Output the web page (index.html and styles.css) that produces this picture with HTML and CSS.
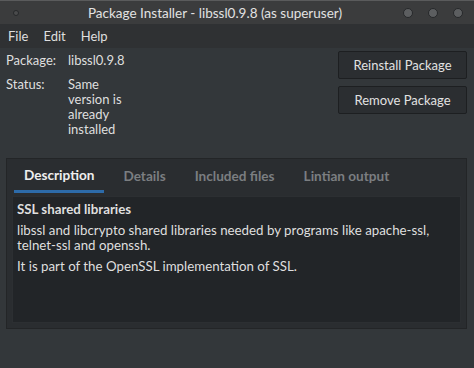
FILE: index.html
```html
<!DOCTYPE html>
<html>
<head>
    <link rel="stylesheet" href="styles.css">
</head>
<body>
    <div class="titlebar">
        <span class="dot small"></span>
        <span class="title">Package Installer - libssl0.9.8 (as superuser)</span>
        <span class="controls">
            <span class="dot"></span>
            <span class="dot"></span>
            <span class="dot"></span>
        </span>
    </div>

    <div class="menubar">
        <span>File</span>
        <span>Edit</span>
        <span>Help</span>
    </div>

    <div class="main">
        <div class="info">
            <div class="row">
                <label>Package:</label>
                <span>libssl0.9.8</span>
            </div>
            <div class="row">
                <label>Status:</label>
                <span class="status">Same<br>version is<br>already<br>installed</span>
            </div>
        </div>
        <div class="actions">
            <button>Reinstall Package</button>
            <button>Remove Package</button>
        </div>
    </div>

    <div class="notebook">
        <div class="tabs">
            <span class="tab active">Description</span>
            <span class="tab">Details</span>
            <span class="tab">Included files</span>
            <span class="tab">Lintian output</span>
        </div>
        <div class="page">
            <h4>SSL shared libraries</h4>
            <p>libssl and libcrypto shared libraries needed by programs like apache-ssl, telnet-ssl and openssh.</p>
            <p>It is part of the OpenSSL implementation of SSL.</p>
        </div>
    </div>
</body>
</html>
```

FILE: styles.css
```css
html,
body {
    margin: 0;
    height: 100%;
}

body {
    background: #33373a;
    color: #dfdfdf;
    font-family: 'Lato', 'Liberation Sans', sans-serif;
    font-size: 13px;
    overflow: hidden;
}

.titlebar {
    height: 24px;
    background: #3b3c3d;
    border-top: 1px solid #5a5b5c;
    box-sizing: border-box;
    display: flex;
    align-items: center;
    padding: 0 12px;
    color: #e2e2e2;
}

.title {
    flex: 1;
    text-align: center;
    padding-left: 8px;
    font-size: 13.5px;
}

.dot {
    display: inline-block;
    width: 10px;
    height: 10px;
    border-radius: 50%;
    background: #5c5e60;
    border: 1px solid #26282a;
    box-sizing: border-box;
}

.dot.small {
    width: 6px;
    height: 6px;
    background: #4a4b4c;
    margin-left: 1px;
}

.controls {
    display: flex;
    gap: 15px;
    margin-right: -1px;
}

.menubar {
    height: 24px;
    background: #2f3133;
    display: flex;
    align-items: center;
    gap: 15px;
    padding: 0 8px;
}

.main {
    display: flex;
    justify-content: space-between;
    padding: 3px 7px 0 6px;
    height: 107px;
}

.info {
    padding-top: 2px;
}

.row {
    display: flex;
    margin-bottom: 9px;
    line-height: 15px;
}

.row label {
    width: 62px;
}

.actions {
    display: flex;
    flex-direction: column;
    gap: 7px;
}

.actions button {
    width: 129px;
    height: 28px;
    background: #2b2e31;
    border: 1px solid #1d1f21;
    border-radius: 2px;
    color: #e2e2e2;
    font-family: inherit;
    font-size: 13px;
}

.notebook {
    margin: 0 7px 0 6px;
    height: 171px;
    background: #2a2d30;
    border: 1px solid #232527;
    box-sizing: border-box;
    padding: 0 5px 5px;
    display: flex;
    flex-direction: column;
}

.tabs {
    display: flex;
    height: 34px;
    align-items: center;
    padding-left: 2px;
    margin-bottom: 3px;
}

.tab {
    padding: 0 10px;
    margin-right: 9px;
    font-weight: bold;
    font-size: 13.6px;
    color: #7b7e81;
    height: 100%;
    display: flex;
    align-items: center;
    box-sizing: border-box;
}

.tab.active {
    color: #eeeeee;
    border-bottom: 3px solid #2d6ba9;
    padding-top: 1px;
}

.page {
    flex: 1;
    background: #222528;
    border: 1px solid #2c2f32;
    padding: 4px 4px;
}

.page h4 {
    margin: 0 0 6px;
    font-size: 13.3px;
}

.page p {
    margin: 0 0 7px;
    line-height: 14.5px;
    font-size: 13.3px;
}
```
